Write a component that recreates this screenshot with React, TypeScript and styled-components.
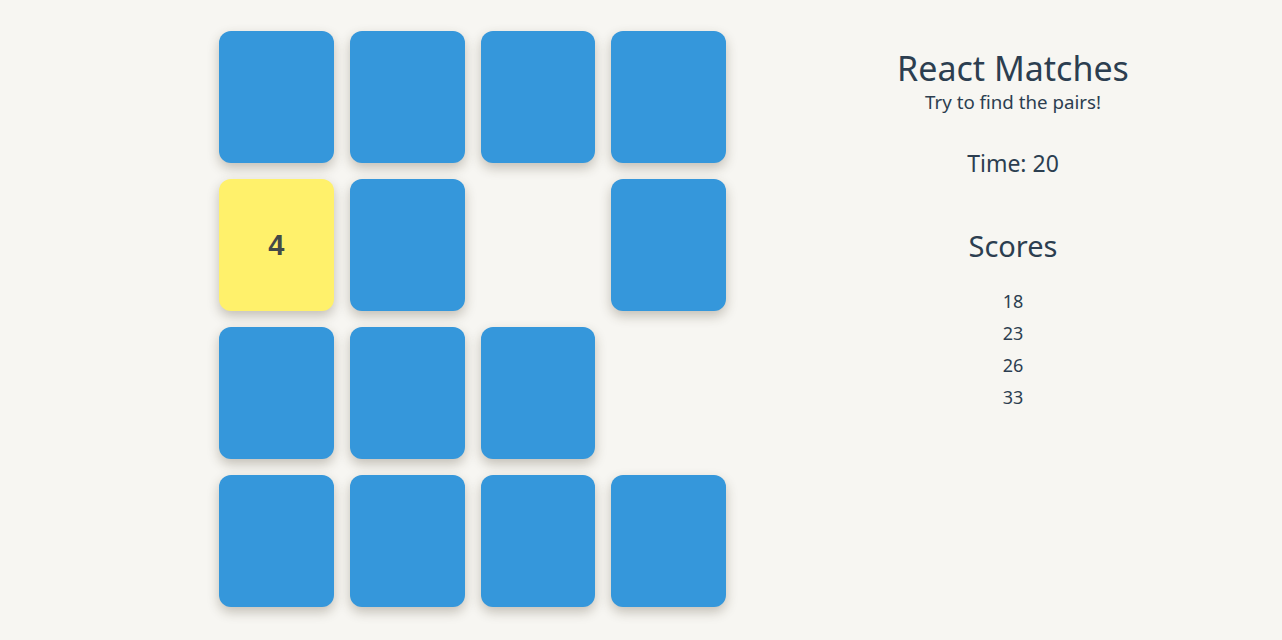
import React from "react";
import styled, { createGlobalStyle } from "styled-components";

const GlobalStyle = createGlobalStyle`
  html, body {
    margin: 0;
    padding: 0;
    background: #f7f6f2;
  }
  body {
    font-family: "Noto Sans", "Open Sans", sans-serif;
    color: #2c3e50;
  }
`;

type CardData = { value: number; state: "hidden" | "open" | "matched" };

const cards: CardData[] = [
  { value: 1, state: "hidden" },
  { value: 5, state: "hidden" },
  { value: 3, state: "hidden" },
  { value: 7, state: "hidden" },
  { value: 4, state: "open" },
  { value: 2, state: "hidden" },
  { value: 6, state: "matched" },
  { value: 8, state: "hidden" },
  { value: 1, state: "hidden" },
  { value: 3, state: "hidden" },
  { value: 5, state: "hidden" },
  { value: 6, state: "matched" },
  { value: 2, state: "hidden" },
  { value: 7, state: "hidden" },
  { value: 4, state: "hidden" },
  { value: 8, state: "hidden" },
];

const scores = [18, 23, 26, 33];

const App = (): JSX.Element => {
  return (
    <>
      <GlobalStyle />
      <Page>
        <Board>
          {cards.map((card, i) => (
            <Card key={i} $state={card.state}>
              {card.state === "open" && card.value}
            </Card>
          ))}
        </Board>
        <Sidebar>
          <Title>React Matches</Title>
          <Subtitle>Try to find the pairs!</Subtitle>
          <Timer>Time: 20</Timer>
          <ScoresTitle>Scores</ScoresTitle>
          <ScoreList>
            {scores.map((s) => (
              <Score key={s}>{s}</Score>
            ))}
          </ScoreList>
        </Sidebar>
      </Page>
    </>
  );
};

const Page = styled.main`
  display: flex;
  align-items: flex-start;
  gap: 18px;
  height: 640px;
  padding: 31px 0 0 219px;
  box-sizing: border-box;
`;

const Board = styled.section`
  display: grid;
  grid-template-columns: repeat(4, 1fr);
  grid-auto-rows: 132px;
  column-gap: 16px;
  row-gap: 16px;
  width: 507px;
`;

const Card = styled.div<{ $state: CardData["state"] }>`
  border-radius: 12px;
  background: ${(p) => (p.$state === "open" ? "#fff16b" : "#3597db")};
  box-shadow: 0 5px 12px rgba(60, 50, 30, 0.28);
  visibility: ${(p) => (p.$state === "matched" ? "hidden" : "visible")};
  display: flex;
  align-items: center;
  justify-content: center;
  font-family: "Liberation Sans", Arial, sans-serif;
  font-weight: 700;
  font-size: 29px;
  color: #434a48;
`;

const Sidebar = styled.aside`
  flex: 1;
  display: flex;
  flex-direction: column;
  align-items: center;
  text-align: center;
`;

const Title = styled.h1`
  margin: 15px 0 0;
  font-size: 34px;
  font-weight: 400;
  line-height: 44px;
`;

const Subtitle = styled.p`
  margin: 1px 0 0;
  font-size: 18.7px;
  line-height: 22px;
`;

const Timer = styled.p`
  margin: 36px 0 0;
  font-size: 23px;
  line-height: 28px;
`;

const ScoresTitle = styled.h2`
  margin: 52px 0 0;
  font-size: 29px;
  font-weight: 400;
  line-height: 34px;
`;

const ScoreList = styled.ul`
  list-style: none;
  margin: 22px 0 0;
  padding: 0;
`;

const Score = styled.li`
  font-size: 18px;
  line-height: 32px;
`;

export default App;
